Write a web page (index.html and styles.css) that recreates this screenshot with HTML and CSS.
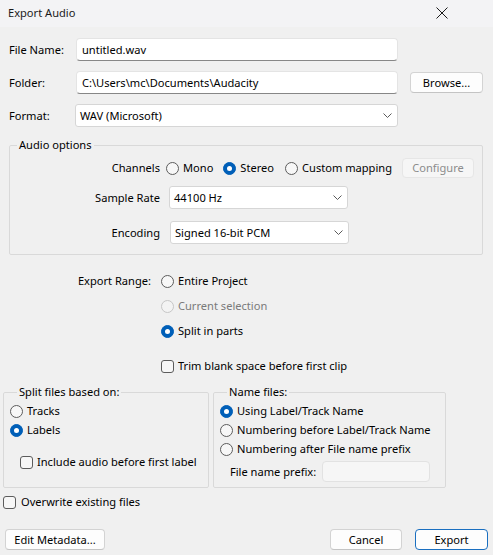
FILE: index.html
```html
<!DOCTYPE html>
<html>
<head>
<meta charset="utf-8">
<link rel="stylesheet" href="styles.css">
</head>
<body>
<div class="dialog">
  <div class="titlebar">
    <span class="title">Export Audio</span>
    <svg class="close" width="12" height="12" viewBox="0 0 12 12"><path d="M0.5 0.5 L11.5 11.5 M11.5 0.5 L0.5 11.5" stroke="#1a1a1a" stroke-width="1" fill="none"/></svg>
  </div>

  <div class="top">
    <label class="tlbl">File Name:</label>
    <div class="textbox">untitled.wav</div>
    <div></div>

    <label class="tlbl">Folder:</label>
    <div class="textbox">C:\Users\mc\Documents\Audacity</div>
    <button class="btn browse">Browse...</button>

    <label class="tlbl">Format:</label>
    <div class="select fmt"><span>WAV (Microsoft)</span><svg class="chev" width="9" height="5" viewBox="0 0 9 5"><path d="M0.5 0.5 L4.5 4.5 L8.5 0.5" stroke="#5a5a5a" fill="none"/></svg></div>
    <div></div>
  </div>

  <fieldset class="group audio">
    <legend>Audio options</legend>
    <div class="frow channels">
      <span class="flbl">Channels</span>
      <span class="ritem"><span class="radio"></span>Mono</span>
      <span class="ritem"><span class="radio on"></span>Stereo</span>
      <span class="ritem"><span class="radio"></span>Custom mapping</span>
      <button class="btn disabled configure">Configure</button>
    </div>
    <div class="frow srate">
      <span class="flbl">Sample Rate</span>
      <div class="select opt"><span>44100 Hz</span><svg class="chev" width="9" height="5" viewBox="0 0 9 5"><path d="M0.5 0.5 L4.5 4.5 L8.5 0.5" stroke="#5a5a5a" fill="none"/></svg></div>
    </div>
    <div class="frow enc">
      <span class="flbl">Encoding</span>
      <div class="select opt"><span>Signed 16-bit PCM</span><svg class="chev" width="9" height="5" viewBox="0 0 9 5"><path d="M0.5 0.5 L4.5 4.5 L8.5 0.5" stroke="#5a5a5a" fill="none"/></svg></div>
    </div>
  </fieldset>

  <div class="range">
    <span class="rlbl">Export Range:</span>
    <div class="rcol">
      <span class="ritem"><span class="radio"></span>Entire Project</span>
      <span class="ritem dis"><span class="radio"></span>Current selection</span>
      <span class="ritem"><span class="radio on"></span>Split in parts</span>
      <span class="citem trim"><span class="check"></span>Trim blank space before first clip</span>
    </div>
  </div>

  <div class="groups">
    <fieldset class="group split">
      <legend>Split files based on:</legend>
      <span class="ritem"><span class="radio"></span>Tracks</span>
      <span class="ritem"><span class="radio on"></span>Labels</span>
      <span class="citem include"><span class="check"></span>Include audio before first label</span>
    </fieldset>
    <fieldset class="group names">
      <legend>Name files:</legend>
      <span class="ritem"><span class="radio on"></span>Using Label/Track Name</span>
      <span class="ritem"><span class="radio"></span>Numbering before Label/Track Name</span>
      <span class="ritem"><span class="radio"></span>Numbering after File name prefix</span>
      <div class="prefix">
        <span>File name prefix:</span>
        <div class="textbox dis"></div>
      </div>
    </fieldset>
  </div>

  <span class="citem overwrite"><span class="check"></span>Overwrite existing files</span>

  <div class="buttons">
    <button class="btn meta">Edit Metadata...</button>
    <span class="spacer"></span>
    <button class="btn cancel">Cancel</button>
    <button class="btn primary export">Export</button>
  </div>
</div>
</body>
</html>
```

FILE: styles.css
```css
* { box-sizing: border-box; }
html, body { margin: 0; padding: 0; }
body {
  width: 493px;
  height: 555px;
  background: #f0f0f0;
  font-family: "Noto Sans", "Liberation Sans", sans-serif;
  font-size: 11.1px;
  line-height: 16px;
  color: #000;
  overflow: hidden;
}
.dialog { display: flex; flex-direction: column; }

.titlebar {
  height: 27px;
  background: #f3f3f5;
  display: flex;
  align-items: center;
  justify-content: space-between;
  padding: 0 45px 1px 8px;
}
.title { color: #1a1a1a; }
.close { display: block; }

.top {
  display: grid;
  grid-template-columns: 55px 322px 73px;
  grid-auto-rows: 23px;
  column-gap: 12px;
  row-gap: 10px;
  padding-left: 9px;
  margin-top: 11px;
  align-items: center;
}
.tlbl { white-space: nowrap; }

.textbox {
  height: 23px;
  background: #fff;
  border: 1px solid #e4e4e4;
  border-bottom-color: #878787;
  border-radius: 4px;
  padding: 0 5px;
  display: flex;
  align-items: center;
  white-space: nowrap;
}
.textbox.dis {
  background: #f6f6f6;
  border-color: #e2e2e2;
}

.select {
  height: 23px;
  background: #fff;
  border: 1px solid #d6d6d6;
  border-radius: 3px;
  display: flex;
  align-items: center;
  justify-content: space-between;
  padding: 0 5px 0 4px;
  white-space: nowrap;
}
.select.fmt { margin-left: -1px; }
.chev { display: block; }

.btn {
  font: inherit;
  color: #000;
  height: 21px;
  background: #fdfdfd;
  border: 1px solid #d3d3d3;
  border-bottom-color: #c4c4c4;
  border-radius: 4px;
  padding: 0;
  display: flex;
  align-items: center;
  justify-content: center;
}
.btn.browse { align-self: start; margin-top: 1px; }
.btn.disabled {
  color: #8c8c8c;
  background: #f6f6f6;
  border-color: #e6e6e6;
}
.btn.primary { border-color: #1a6fc0; }

.group {
  margin: 0;
  padding: 0;
  border: 1px solid #d9d9d9;
  border-radius: 2px;
  min-width: 0;
}
.group legend {
  padding: 0 2px;
  margin-left: 7px;
  line-height: 16px;
}

.audio {
  margin: 10px 10px 0 9px;
  padding: 5px 0 10px;
}
.frow { display: flex; align-items: center; }
.flbl { width: 150px; text-align: right; margin-right: 8px; white-space: nowrap; }
.channels { height: 20px; }
.channels .flbl { margin-right: 6px; }
.channels .ritem { margin-right: 10px; }
.channels .ritem:nth-of-type(3) { margin-right: 11px; }
.configure { width: 72px; height: 20px; }
.srate { margin-top: 8px; }
.enc { margin-top: 12px; }
.srate .select.opt { margin-left: 1px; }
.select.opt { width: 179px; margin-left: 2px; }

.ritem, .citem {
  display: flex;
  align-items: center;
  height: 16px;
  white-space: nowrap;
}
.radio {
  width: 13px;
  height: 13px;
  border-radius: 50%;
  border: 1px solid #5c5c5c;
  background: #f7f7f7;
  margin-right: 4px;
  flex: none;
  position: relative;
}
.radio.on {
  background: #005fb8;
  border-color: #005fb8;
}
.radio.on::after {
  content: "";
  position: absolute;
  left: 3px;
  top: 3px;
  width: 5px;
  height: 5px;
  border-radius: 50%;
  background: #fff;
}
.ritem.dis { color: #7a7a7a; }
.ritem.dis .radio { border-color: #c6c6c6; background: #f3f3f3; }

.check {
  width: 13px;
  height: 13px;
  border: 1px solid #5c5c5c;
  border-radius: 3px;
  background: #f7f7f7;
  margin-right: 4px;
  flex: none;
}

.range { display: flex; margin-top: 18px; }
.rlbl { width: 151px; text-align: right; margin-right: 10px; }
.rcol { display: flex; flex-direction: column; gap: 9px; }
.rcol .trim { margin-top: 10px; }

.groups {
  display: flex;
  gap: 4px;
  margin-top: 10px;
  padding-left: 3px;
}
.split, .names {
  display: flex;
  flex-direction: column;
  padding: 3px 0 5px 6px;
}
.split { width: 206px; }
.names { width: 233px; }
.split .ritem, .names .ritem { margin-bottom: 3px; }
.include { margin-top: 13px; margin-left: 10px; }
.prefix {
  display: flex;
  align-items: center;
  margin-top: 1px;
  padding-left: 10px;
  height: 21px;
}
.prefix span { width: 92px; white-space: nowrap; }
.prefix .textbox { width: 108px; height: 21px; }

.overwrite { margin-top: 6px; margin-left: 3px; }
.overwrite .check { margin-right: 5px; }

.buttons {
  display: flex;
  margin-top: 19px;
  padding: 0 5px;
  gap: 13px;
}
.spacer { flex: 1; }
.meta { width: 100px; }
.cancel { width: 72px; }
.export { width: 73px; }
```
